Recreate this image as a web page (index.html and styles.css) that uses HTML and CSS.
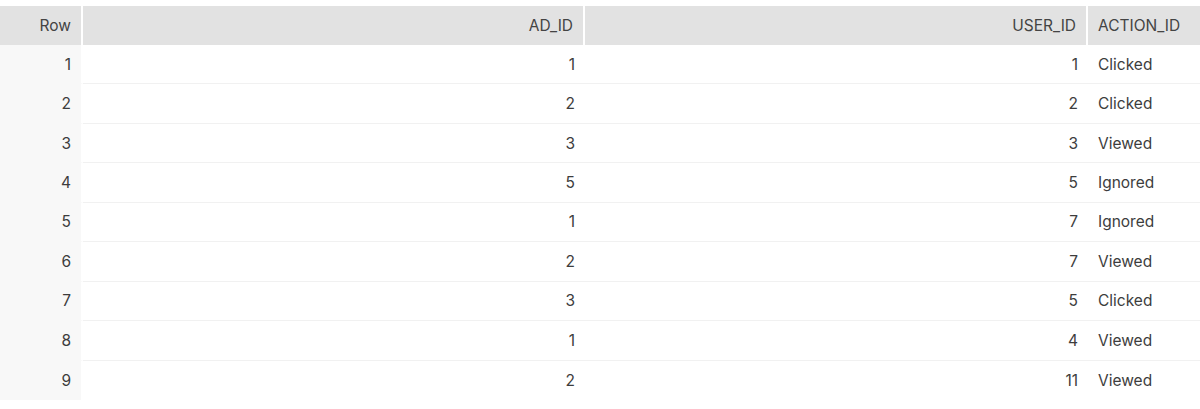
FILE: index.html
```html
<!DOCTYPE html>
<html>
<head>
<meta charset="utf-8">
<link rel="stylesheet" href="styles.css">
</head>
<body>
<table class="grid">
  <colgroup>
    <col class="c-row"><col class="c-ad"><col class="c-user"><col class="c-action">
  </colgroup>
  <thead>
    <tr><th class="num">Row</th><th class="num">AD_ID</th><th class="num">USER_ID</th><th class="txt">ACTION_ID</th></tr>
  </thead>
  <tbody>
    <tr><td class="rn">1</td><td class="num">1</td><td class="num">1</td><td class="txt">Clicked</td></tr>
    <tr><td class="rn">2</td><td class="num">2</td><td class="num">2</td><td class="txt">Clicked</td></tr>
    <tr><td class="rn">3</td><td class="num">3</td><td class="num">3</td><td class="txt">Viewed</td></tr>
    <tr><td class="rn">4</td><td class="num">5</td><td class="num">5</td><td class="txt">Ignored</td></tr>
    <tr><td class="rn">5</td><td class="num">1</td><td class="num">7</td><td class="txt">Ignored</td></tr>
    <tr><td class="rn">6</td><td class="num">2</td><td class="num">7</td><td class="txt">Viewed</td></tr>
    <tr><td class="rn">7</td><td class="num">3</td><td class="num">5</td><td class="txt">Clicked</td></tr>
    <tr><td class="rn">8</td><td class="num">1</td><td class="num">4</td><td class="txt">Viewed</td></tr>
    <tr><td class="rn">9</td><td class="num">2</td><td class="num">11</td><td class="txt">Viewed</td></tr>
  </tbody>
</table>
</body>
</html>
```
FILE: styles.css
```css
html, body {
  margin: 0;
  padding: 0;
  background: #ffffff;
}
body {
  padding-top: 6px;
  font-family: Inter, "Noto Sans", sans-serif;
  font-size: 15.5px;
  color: #3d3d3d;
}
.grid {
  width: 1200px;
  border-collapse: separate;
  border-spacing: 0;
  table-layout: fixed;
}
.c-row { width: 83px; }
.c-ad { width: 502px; }
.c-user { width: 503px; }
.c-action { width: auto; }
th {
  background: #e2e2e2;
  font-weight: 400;
  height: 39px;
  padding: 0 10px;
  border-right: 2px solid #ffffff;
  box-sizing: border-box;
  color: #444444;
}
th:last-child { border-right: none; }
td {
  height: 39.44px;
  padding: 0 10px;
  border-bottom: 1px solid #f1f1f1;
  box-sizing: border-box;
}
tbody tr:last-child td { border-bottom: none; }
.num { text-align: right; }
.txt { text-align: left; }
td.rn {
  text-align: right;
  background: #f8f8f8;
  border-right: 2px solid #ffffff;
  border-bottom-color: #f8f8f8;
}
```
